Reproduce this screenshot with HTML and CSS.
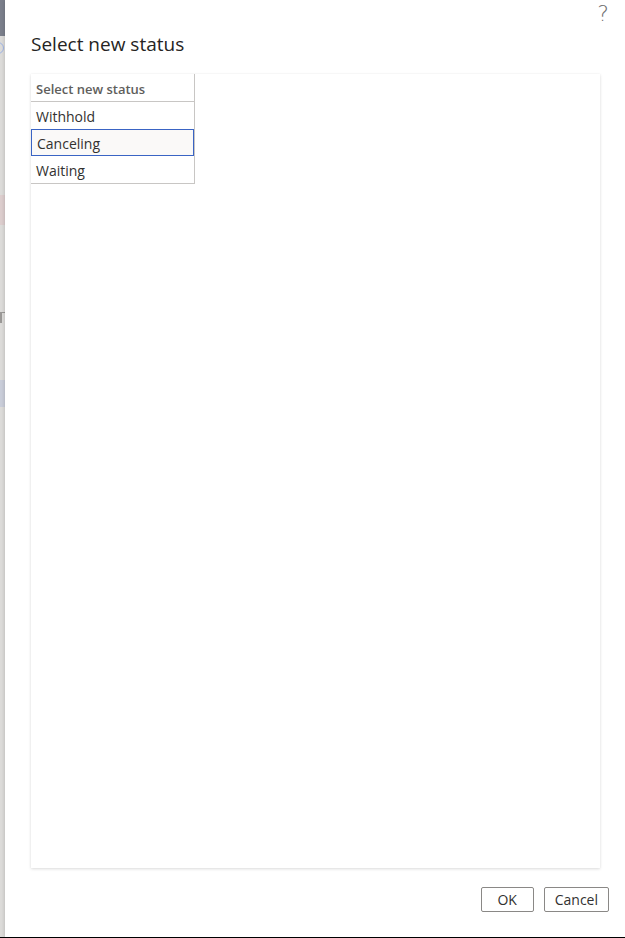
FILE: index.html
```html
<!DOCTYPE html>
<html lang="en">
<head>
  <meta charset="UTF-8" />
  <meta name="viewport" content="width=device-width, initial-scale=1.0" />
  <title>Select new status</title>
  <link rel="stylesheet" href="styles.css">
</head>
<body>
  <div class="page">
    <div class="backdrop">
      <div class="bd-top"></div>
      <div class="bd-mark blue-ring"></div>
      <div class="bd-mark pink"></div>
      <div class="bd-mark glyph"></div>
      <div class="bd-mark lilac"></div>
    </div>
    <div class="dialog">
      <button class="help" title="Help">?</button>
      <h1 class="title">Select new status</h1>
      <div class="panel">
        <div class="grid">
          <div class="grid-head">Select new status</div>
          <div class="grid-row">Withhold</div>
          <div class="grid-row selected">Canceling</div>
          <div class="grid-row">Waiting</div>
        </div>
      </div>
      <div class="actions">
        <button class="btn">OK</button>
        <button class="btn">Cancel</button>
      </div>
    </div>
  </div>
</body>
</html>
```
FILE: styles.css
```css
body {
  margin: 0;
  padding: 0;
  font-family: "Open Sans", "Noto Sans", sans-serif;
  color: #323130;
  background: #fff;
}
.page {
  display: flex;
  height: 937px;
  border-bottom: 1px solid #000;
  overflow: hidden;
}
.backdrop {
  width: 5px;
  flex-shrink: 0;
  background: #dcdbd9;
  position: relative;
  overflow: hidden;
}
.bd-top {
  height: 36px;
  background: #7b7f8b;
}
.bd-mark {
  position: absolute;
  left: 0;
}
.blue-ring {
  top: 42px;
  left: -8px;
  width: 10px;
  height: 10px;
  border: 1px solid #9fb4e6;
  border-radius: 50%;
}
.pink {
  top: 195px;
  width: 5px;
  height: 30px;
  background: #dccdcd;
}
.glyph {
  top: 312px;
  width: 3px;
  height: 10px;
  border-left: 2px solid #9a9896;
  border-top: 1px solid #9a9896;
}
.lilac {
  top: 380px;
  width: 5px;
  height: 27px;
  background: #c9cdd9;
}
.dialog {
  flex: 1;
  position: relative;
  display: flex;
  flex-direction: column;
  padding: 0 16px 0 26px;
  box-shadow: -1px 0 3px rgba(0,0,0,0.12);
}
.help {
  position: absolute;
  top: 1px;
  right: 16px;
  border: none;
  background: none;
  padding: 0;
  font-family: "DejaVu Sans", sans-serif;
  font-weight: 200;
  font-size: 22px;
  color: #707070;
  cursor: pointer;
}
.title {
  margin: 31px 0 0;
  font-size: 19px;
  font-weight: 500;
  line-height: 26px;
  color: #252423;
}
.panel {
  margin-top: 17px;
  margin-right: 9px;
  height: 794px;
  background: #fff;
  box-shadow: 0 1px 3px rgba(0,0,0,0.14), 0 0 1px rgba(0,0,0,0.05);
}
.grid {
  width: 163px;
  border-right: 1px solid #c8c6c4;
  border-bottom: 1px solid #c8c6c4;
}
.grid-head {
  height: 27px;
  line-height: 31px;
  padding-left: 5px;
  font-size: 13px;
  font-weight: 600;
  color: #605e5c;
  border-bottom: 1px solid #c8c6c4;
}
.grid-row {
  height: 27px;
  line-height: 29px;
  padding-left: 5px;
  font-size: 14px;
  color: #323130;
  box-sizing: border-box;
}
.grid-row.selected {
  background: #faf9f8;
  border: 1px solid #3a64c4;
  padding-left: 5px;
  line-height: 27px;
}
.actions {
  display: flex;
  justify-content: flex-end;
  gap: 10px;
  margin-top: 19px;
}
.btn {
  height: 25px;
  min-width: 53px;
  padding: 0 10px;
  background: #fff;
  border: 1px solid #8a8886;
  border-radius: 2px;
  font-family: "Open Sans", "Noto Sans", sans-serif;
  font-size: 14px;
  color: #323130;
  cursor: pointer;
}
```
